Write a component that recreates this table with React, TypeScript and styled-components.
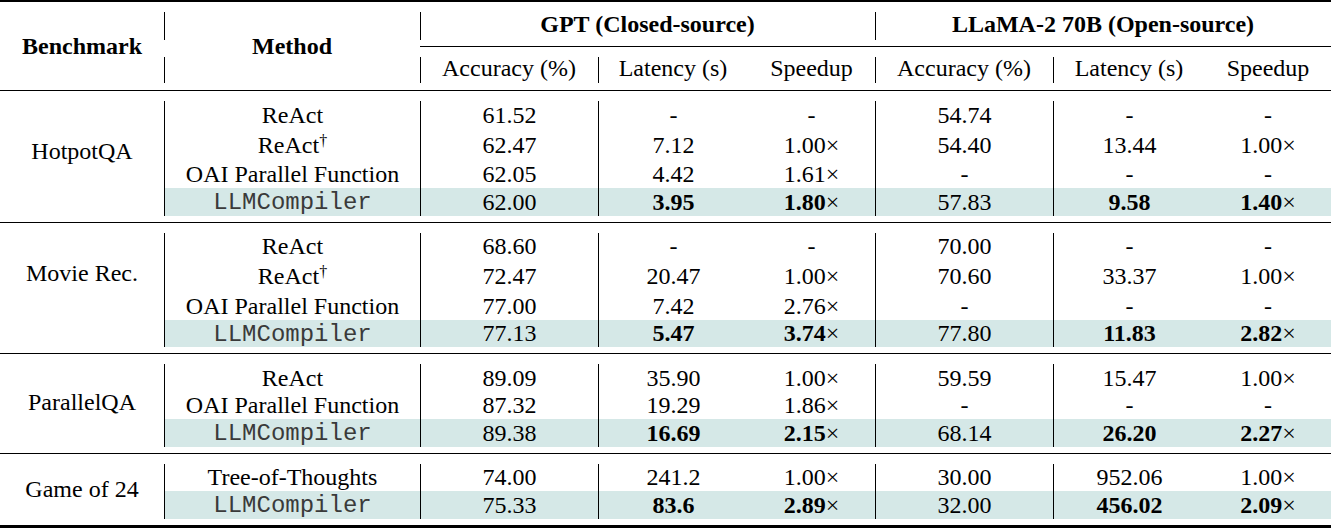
import React from "react";
import styled, { createGlobalStyle } from "styled-components";

const GlobalStyle = createGlobalStyle`
  body {
    margin: 0;
    background: #fff;
    color: #000;
    font-family: "Liberation Serif", "Times New Roman", serif;
  }
`;

// column widths, measured off the paper table
const COLS = "164px 256px 178px 150px 127px 178px 152px 126px";
const BAR_COLS = [2, 3, 4, 6, 7];

type Row = {
  method: string;
  dagger?: boolean;
  ours?: boolean;
  tall?: boolean;
  vals: string[];
};

type Group = {
  name: string;
  shift: number;
  rows: Row[];
};

const groups: Group[] = [
  {
    name: "HotpotQA",
    shift: 7,
    rows: [
      { method: "ReAct", vals: ["61.52", "-", "-", "54.74", "-", "-"] },
      { method: "ReAct", dagger: true, tall: true, vals: ["62.47", "7.12", "1.00", "54.40", "13.44", "1.00"] },
      { method: "OAI Parallel Function", vals: ["62.05", "4.42", "1.61", "-", "-", "-"] },
      { method: "LLMCompiler", ours: true, vals: ["62.00", "3.95", "1.80", "57.83", "9.58", "1.40"] },
    ],
  },
  {
    name: "Movie Rec.",
    shift: 16,
    rows: [
      { method: "ReAct", vals: ["68.60", "-", "-", "70.00", "-", "-"] },
      { method: "ReAct", dagger: true, tall: true, vals: ["72.47", "20.47", "1.00", "70.60", "33.37", "1.00"] },
      { method: "OAI Parallel Function", vals: ["77.00", "7.42", "2.76", "-", "-", "-"] },
      { method: "LLMCompiler", ours: true, vals: ["77.13", "5.47", "3.74", "77.80", "11.83", "2.82"] },
    ],
  },
  {
    name: "ParallelQA",
    shift: 3,
    rows: [
      { method: "ReAct", vals: ["89.09", "35.90", "1.00", "59.59", "15.47", "1.00"] },
      { method: "OAI Parallel Function", vals: ["87.32", "19.29", "1.86", "-", "-", "-"] },
      { method: "LLMCompiler", ours: true, vals: ["89.38", "16.69", "2.15", "68.14", "26.20", "2.27"] },
    ],
  },
  {
    name: "Game of 24",
    shift: 2,
    rows: [
      { method: "Tree-of-Thoughts", vals: ["74.00", "241.2", "1.00", "30.00", "952.06", "1.00"] },
      { method: "LLMCompiler", ours: true, vals: ["75.33", "83.6", "2.89", "32.00", "456.02", "2.09"] },
    ],
  },
];

const Table = styled.div`
  width: 1331px;
  border-top: 2px solid #000;
  border-bottom: 3px solid #000;
  font-size: 24px;
`;

const Head = styled.div`
  display: grid;
  grid-template-columns: ${COLS};
  grid-template-rows: 44px 1px 43px;
  border-bottom: 1px solid #000;
`;

const HeadCell = styled.div<{ $col: string; $row: string; $bold?: boolean }>`
  grid-column: ${(p) => p.$col};
  grid-row: ${(p) => p.$row};
  display: flex;
  align-items: center;
  justify-content: center;
  font-weight: ${(p) => (p.$bold ? 700 : 400)};
  white-space: nowrap;
`;

const CMidRule = styled.div`
  grid-column: 3 / 9;
  grid-row: 2;
  background: #000;
`;

const VBar = styled.div<{ $col: number; $row: number }>`
  grid-column: ${(p) => p.$col};
  grid-row: ${(p) => p.$row};
  justify-self: start;
  width: 1px;
  background: #000;
  margin: ${(p) => (p.$row === 1 ? "10px 0 6px" : "10px 0 7px")};
`;

const Body = styled.div<{ $rows: string }>`
  display: grid;
  grid-template-columns: ${COLS};
  grid-template-rows: ${(p) => p.$rows};
  padding: 10px 0 6px;
  border-bottom: 1px solid #000;

  &:last-child {
    border-bottom: none;
  }
`;

const Bench = styled.div<{ $shift: number }>`
  grid-column: 1;
  grid-row: 1 / -1;
  display: flex;
  align-items: center;
  justify-content: center;
  padding-bottom: ${(p) => p.$shift * 2}px;
  white-space: nowrap;
`;

const Cell = styled.div<{ $bar?: boolean; $hl?: boolean }>`
  display: flex;
  align-items: center;
  justify-content: center;
  white-space: nowrap;
  line-height: 1;
  border-left: ${(p) => (p.$bar ? "1px solid #000" : "none")};
  background: ${(p) => (p.$hl ? "#d5e8e7" : "transparent")};
`;

const Mono = styled.span`
  font-family: "Liberation Mono", "Courier New", monospace;
  color: #3a3a3a;
  font-size: 24px;
  margin-top: 3px;
`;

const Dagger = styled.sup`
  font-size: 16px;
  line-height: 0;
  vertical-align: 0.45em;
`;

const B = styled.b`
  font-weight: 700;
`;

function Value({ v, speed, bold }: { v: string; speed: boolean; bold: boolean }) {
  if (v === "-") return <>-</>;
  const num = bold ? <B>{v}</B> : v;
  return (
    <>
      {num}
      {speed && "×"}
    </>
  );
}

export default function App() {
  return (
    <>
      <GlobalStyle />
      <Table>
        <Head>
          <HeadCell $col="1" $row="1 / 4" $bold>
            Benchmark
          </HeadCell>
          <HeadCell $col="2" $row="1 / 4" $bold>
            Method
          </HeadCell>
          <HeadCell $col="3 / 6" $row="1" $bold>
            GPT (Closed-source)
          </HeadCell>
          <HeadCell $col="6 / 9" $row="1" $bold>
            LLaMA-2 70B (Open-source)
          </HeadCell>
          <CMidRule />
          <HeadCell $col="3" $row="3">Accuracy (%)</HeadCell>
          <HeadCell $col="4" $row="3">Latency (s)</HeadCell>
          <HeadCell $col="5" $row="3">Speedup</HeadCell>
          <HeadCell $col="6" $row="3">Accuracy (%)</HeadCell>
          <HeadCell $col="7" $row="3">Latency (s)</HeadCell>
          <HeadCell $col="8" $row="3">Speedup</HeadCell>
          <VBar $col={2} $row={1} />
          <VBar $col={3} $row={1} />
          <VBar $col={6} $row={1} />
          <VBar $col={2} $row={3} />
          <VBar $col={3} $row={3} />
          <VBar $col={4} $row={3} />
          <VBar $col={6} $row={3} />
          <VBar $col={7} $row={3} />
        </Head>

        {groups.map((g) => (
          <Body key={g.name} $rows={g.rows.map((r) => (r.tall ? "32px" : "27.5px")).join(" ")}>
            <Bench $shift={g.shift}>{g.name}</Bench>
            {g.rows.map((r, ri) => (
              <React.Fragment key={ri}>
                <Cell $bar $hl={r.ours}>
                  {r.ours ? (
                    <Mono>{r.method}</Mono>
                  ) : (
                    <span>
                      {r.method}
                      {r.dagger && <Dagger>†</Dagger>}
                    </span>
                  )}
                </Cell>
                {r.vals.map((v, vi) => (
                  <Cell key={vi} $bar={BAR_COLS.includes(vi + 3)} $hl={r.ours}>
                    <Value v={v} speed={vi % 3 === 2} bold={!!r.ours && vi % 3 !== 0} />
                  </Cell>
                ))}
              </React.Fragment>
            ))}
          </Body>
        ))}
      </Table>
    </>
  );
}
